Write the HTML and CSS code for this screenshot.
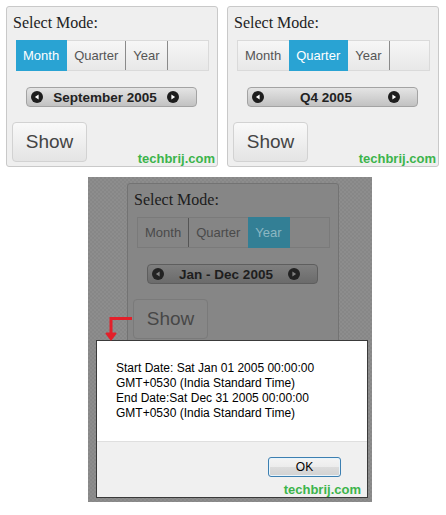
FILE: index.html
```html
<!DOCTYPE html>
<html>
<head>
<meta charset="utf-8">
<link rel="stylesheet" href="styles.css">
</head>
<body>
<div class="top">
  <div class="panel">
    <p class="label">Select Mode:</p>
    <div class="seg">
      <span class="seg__item seg__item--on">Month</span>
      <span class="seg__item">Quarter</span>
      <span class="seg__item">Year</span>
      <span class="seg__rest"></span>
    </div>
    <div class="nav">
      <svg class="nav__icon" viewBox="0 0 12 12"><circle class="ico-bg" cx="6" cy="6" r="6"/><path class="ico-fg" d="M7.6 3.4 L3.9 6 L7.6 8.6 Z"/></svg>
      <span class="nav__text">September 2005</span>
      <svg class="nav__icon" viewBox="0 0 12 12"><circle class="ico-bg" cx="6" cy="6" r="6"/><path class="ico-fg" d="M4.4 3.4 L8.1 6 L4.4 8.6 Z"/></svg>
    </div>
    <div class="foot">
      <button class="show">Show</button>
      <span class="mark">techbrij.com</span>
    </div>
  </div>
  <div class="panel">
    <p class="label">Select Mode:</p>
    <div class="seg">
      <span class="seg__item">Month</span>
      <span class="seg__item seg__item--on">Quarter</span>
      <span class="seg__item">Year</span>
      <span class="seg__rest"></span>
    </div>
    <div class="nav">
      <svg class="nav__icon" viewBox="0 0 12 12"><circle class="ico-bg" cx="6" cy="6" r="6"/><path class="ico-fg" d="M7.6 3.4 L3.9 6 L7.6 8.6 Z"/></svg>
      <span class="nav__text">Q4 2005</span>
      <svg class="nav__icon" viewBox="0 0 12 12"><circle class="ico-bg" cx="6" cy="6" r="6"/><path class="ico-fg" d="M4.4 3.4 L8.1 6 L4.4 8.6 Z"/></svg>
    </div>
    <div class="foot">
      <button class="show">Show</button>
      <span class="mark">techbrij.com</span>
    </div>
  </div>
</div>

<div class="shot">
  <div class="panel panel--dim">
    <p class="label">Select Mode:</p>
    <div class="seg">
      <span class="seg__item">Month</span>
      <span class="seg__item">Quarter</span>
      <span class="seg__item seg__item--on">Year</span>
      <span class="seg__rest"></span>
    </div>
    <div class="nav">
      <svg class="nav__icon" viewBox="0 0 12 12"><circle class="ico-bg" cx="6" cy="6" r="6"/><path class="ico-fg" d="M7.6 3.4 L3.9 6 L7.6 8.6 Z"/></svg>
      <span class="nav__text">Jan - Dec 2005</span>
      <svg class="nav__icon" viewBox="0 0 12 12"><circle class="ico-bg" cx="6" cy="6" r="6"/><path class="ico-fg" d="M4.4 3.4 L8.1 6 L4.4 8.6 Z"/></svg>
    </div>
    <div class="foot">
      <button class="show">Show</button>
    </div>
  </div>

  <div class="dialog">
    <p class="dialog__body">Start Date: Sat Jan 01 2005 00:00:00<br>GMT+0530 (India Standard Time)<br>End Date:Sat Dec 31 2005 00:00:00<br>GMT+0530 (India Standard Time)</p>
    <div class="dialog__foot">
      <button class="ok">OK</button>
      <span class="mark mark--dialog">techbrij.com</span>
    </div>
  </div>

  <svg class="arrow" viewBox="0 0 30 28" width="30" height="28">
    <path d="M28 3.5 H7 V18" fill="none" stroke="#e3202a" stroke-width="3"/>
    <path d="M2.5 18.5 H11.5 L7 24.5 Z" fill="#e3202a" stroke="#e3202a" stroke-width="2" stroke-linejoin="round"/>
  </svg>
</div>
</body>
</html>
```

FILE: styles.css
```css
* { box-sizing: border-box; }

body {
  margin: 0;
  background: #fff;
  font-family: "Liberation Sans", Arial, sans-serif;
}

.top {
  display: flex;
  gap: 9px;
  padding: 6px 0 0 6px;
}

.panel {
  width: 212px;
  height: 161px;
  background: #efefef;
  border: 1px solid #c9c9c9;
  border-radius: 3px;
  padding: 7px 0 0 5px;
}

.label {
  margin: 0;
  padding-left: 1px;
  font-family: "Liberation Serif", "Times New Roman", serif;
  font-size: 16px;
  line-height: 18px;
  color: #222;
}

.seg {
  display: flex;
  width: 193px;
  height: 31px;
  margin: 8px 0 0 4px;
  border: 1px solid #dadada;
  background: linear-gradient(#f6f6f6, #e8e8e8);
}

.seg__item {
  padding: 0 7px;
  font-size: 13px;
  line-height: 29px;
  color: #555;
  border-right: 1px solid #8a8a8a;
}

.seg__item:has(+ .seg__item--on) { border-right-color: transparent; }

.seg__item--on {
  margin: -1px 0;
  line-height: 31px;
  background: #29a3d3;
  color: #fff;
  border-right-color: transparent;
}

.seg__item--on:first-child { margin-left: -1px; }

.seg__rest { flex: 1; }

.nav {
  display: flex;
  align-items: center;
  width: 171px;
  height: 20px;
  margin: 16px 0 0 14px;
  padding: 0 17px 0 4px;
  border: 1px solid #a3a3a3;
  border-radius: 4px;
  background: linear-gradient(#e4e4e4, #c2c2c2);
}

.nav__icon { display: block; width: 12px; height: 12px; }
.ico-bg { fill: #1d1d1d; }
.ico-fg { fill: #fff; }

.nav__text {
  flex: 1;
  text-align: center;
  font-size: 13.5px;
  font-weight: bold;
  color: #222;
}

.foot {
  display: flex;
  justify-content: space-between;
  align-items: flex-end;
  margin-top: 15px;
  padding-right: 2px;
}

.show {
  width: 75px;
  height: 40px;
  padding: 0;
  border: 1px solid #d2d2d2;
  border-radius: 4px;
  background: linear-gradient(#f9f9f9, #e4e4e4);
  font-family: "Liberation Sans", Arial, sans-serif;
  font-size: 19px;
  color: #444;
}

.mark {
  margin-bottom: -4px;
  font-size: 13px;
  font-weight: bold;
  line-height: 15px;
  color: #3cb44b;
}

/* screenshot with modal */
.shot {
  position: relative;
  width: 284px;
  height: 325px;
  margin: 10px 0 0 88px;
  padding: 6px 0 0 39px;
  overflow: hidden;
  background-color: #8a8a8a;
  background-image: repeating-conic-gradient(#8d8d8d 0 25%, #878787 0 50%);
  background-size: 4px 4px;
}

.panel--dim { background: #868686; border-color: #737373; }
.panel--dim .label { color: #1c1c1c; }
.panel--dim .seg { background: #858585; border-color: #7a7a7a; }
.panel--dim .seg__item { color: #4a4a4a; border-right-color: #555; }
.panel--dim .seg__item:has(+ .seg__item--on) { border-right-color: transparent; }
.panel--dim .seg__item--on { background: #337f95; color: #8cb7c3; border-right-color: transparent; }
.panel--dim .nav { background: linear-gradient(#7f7f7f, #6b6b6b); border-color: #5e5e5e; }
.panel--dim .nav__text { color: #1e1e1e; }
.panel--dim .ico-bg { fill: #222; }
.panel--dim .ico-fg { fill: #808080; }
.panel--dim .show { background: #878787; border-color: #7a7a7a; color: #474747; }

.dialog {
  position: absolute;
  left: 8px;
  top: 163px;
  width: 272px;
  height: 158px;
  display: flex;
  flex-direction: column;
  background: #fff;
  border: 1px solid #3a3a3a;
}

.dialog__body {
  flex: 1;
  margin: 0;
  padding: 20px 0 0 19px;
  font-size: 12px;
  line-height: 15px;
  color: #000;
}

.dialog__foot {
  height: 56px;
  display: flex;
  flex-direction: column;
  align-items: flex-end;
  padding: 15px 26px 0 0;
  background: #f0f0f0;
  border-top: 1px solid #dfdfdf;
}

.ok {
  width: 73px;
  height: 22px;
  padding: 0;
  border: 1px solid #3c7fb1;
  border-radius: 3px;
  background: linear-gradient(#f4f4f4 0%, #ececec 50%, #dcdcdc 51%, #d2d2d2 100%);
  box-shadow: inset 0 0 0 1px #e8f4fb;
  font-family: "Liberation Sans", Arial, sans-serif;
  font-size: 12px;
  color: #000;
}

.mark--dialog { margin: 5px -20px 0 0; }

.arrow {
  position: absolute;
  left: 16px;
  top: 138px;
}
```
